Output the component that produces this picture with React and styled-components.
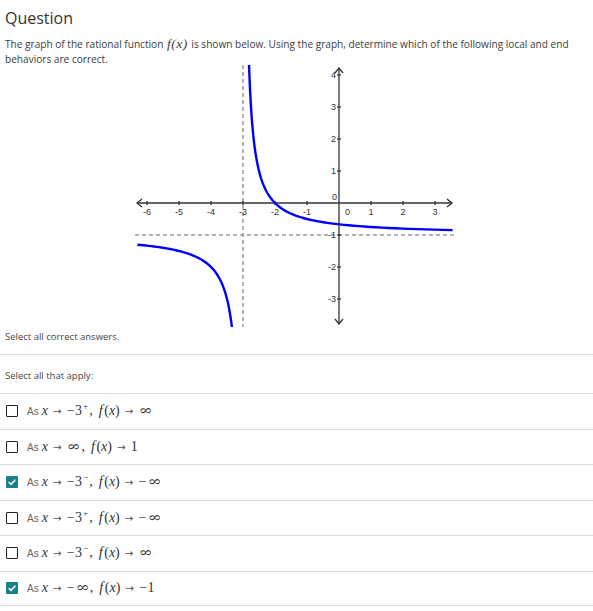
import React from 'react';
import styled, { createGlobalStyle } from 'styled-components';

const GlobalStyle = createGlobalStyle`
  html, body {
    margin: 0;
    padding: 0;
    background: #fff;
    overflow: hidden;
  }
  body {
    font-family: "Open Sans", "Liberation Sans", sans-serif;
    color: #333;
  }
`;

const U = 32;
const OX = 204;
const OY = 138;
const px = (x) => OX + x * U;
const py = (y) => OY - y * U;
const f = (x) => -1 + 1 / (x + 3);

const branch = (from, to, sign) => {
  const pts = [];
  const a = Math.log(from);
  const b = Math.log(to);
  for (let i = 0; i <= 80; i++) {
    const d = Math.exp(a + ((b - a) * i) / 80);
    const x = -3 + sign * d;
    pts.push(`${px(x).toFixed(2)},${py(f(x)).toFixed(2)}`);
  }
  return 'M' + pts.join(' L');
};

const rightPath = branch(0.17, 6.55, 1);
const leftPath = branch(0.34, 3.3, -1);

const options = [
  { id: 1, checked: false, lim: ['−', '3'], side: '+', val: ['', '∞'] },
  { id: 2, checked: false, lim: ['', '∞'], side: null, val: ['', '1'] },
  { id: 3, checked: true, lim: ['−', '3'], side: '−', val: ['−', '∞'] },
  { id: 4, checked: false, lim: ['−', '3'], side: '+', val: ['−', '∞'] },
  { id: 5, checked: false, lim: ['−', '3'], side: '−', val: ['', '∞'] },
  { id: 6, checked: true, lim: ['−', '∞'], side: null, val: ['−', '1'] },
];

const Graph = () => {
  const xs = [-6, -5, -4, -3, -2, -1, 1, 2, 3];
  const ys = [-3, -2, -1, 1, 2, 3, 4];
  return (
    <GraphSvg width="319" height="262" viewBox="0 0 319 262">
      <line x1={px(-3)} y1="0" x2={px(-3)} y2="262" stroke="#9a9a9a" strokeWidth="1.5" strokeDasharray="4 3" />
      <line x1="0" y1={py(-1)} x2="319" y2={py(-1)} stroke="#9a9a9a" strokeWidth="1.5" strokeDasharray="4 3" />
      <g stroke="#333" strokeWidth="1.3" fill="none">
        <line x1="2" y1={OY} x2="317" y2={OY} />
        <polyline points={`7,${OY - 4} 2,${OY} 7,${OY + 4}`} />
        <polyline points={`312,${OY - 4} 317,${OY} 312,${OY + 4}`} />
        <line x1={OX} y1="3" x2={OX} y2="259" />
        <polyline points={`${OX - 4},8 ${OX},3 ${OX + 4},8`} />
        <polyline points={`${OX - 4},254 ${OX},259 ${OX + 4},254`} />
        {xs.map((x) => (
          <line key={'xt' + x} x1={px(x)} y1={OY - 2} x2={px(x)} y2={OY + 2} />
        ))}
        {ys.map((y) => (
          <line key={'yt' + y} x1={OX - 2} y1={py(y)} x2={OX + 2} y2={py(y)} />
        ))}
      </g>
      <g fill="#333" fontFamily='"Liberation Sans", Arial, sans-serif' fontSize="9">
        {xs.map((x) => (
          <text key={'xl' + x} x={px(x)} y={OY + 12} textAnchor="middle">
            {x < 0 ? '-' + -x : x}
          </text>
        ))}
        <text x={OX + 6} y={OY + 12}>0</text>
        <text x={OX - 2} y={OY - 3} textAnchor="end">0</text>
        {ys.map((y) => (
          <text key={'yl' + y} x={OX - 3} y={py(y) + 3} textAnchor="end">
            {y < 0 ? '-' + -y : y}
          </text>
        ))}
      </g>
      <path d={rightPath} stroke="#0000ff" strokeWidth="2.4" fill="none" />
      <path d={leftPath} stroke="#0000ff" strokeWidth="2.4" fill="none" />
    </GraphSvg>
  );
};

const Check = () => (
  <svg width="10" height="10" viewBox="0 0 10 10">
    <polyline points="1.8,5.2 4,7.3 8.4,2.8" stroke="#fff" strokeWidth="1.6" fill="none" />
  </svg>
);

const Num = ({ parts }) => (
  <>
    {parts[0] && <Minus>{parts[0]}</Minus>}
    {parts[1] === '∞' ? <Inf>∞</Inf> : <Mn>{parts[1]}</Mn>}
  </>
);

const Option = ({ o }) => (
  <Row>
    <Box $checked={o.checked}>{o.checked && <Check />}</Box>
    <Label>
      <As>As</As>
      <Mi>x</Mi>
      <Rel>→</Rel>
      <Num parts={o.lim} />
      {o.side && <Sup>{o.side}</Sup>}
      <Comma>,</Comma>
      <Fn>f</Fn>
      <Mn>(</Mn>
      <Mi>x</Mi>
      <Mn>)</Mn>
      <Rel>→</Rel>
      <Num parts={o.val} />
    </Label>
  </Row>
);

export default function App() {
  return (
    <Page>
      <GlobalStyle />
      <Title>Question</Title>
      <Prompt>
        The graph of the rational function <InlineMath>f(x)</InlineMath> is shown below. Using the graph, determine
        which of the following local and end behaviors are correct.
      </Prompt>
      <Graph />
      <Hint>Select all correct answers.</Hint>
      <Instruction>Select all that apply:</Instruction>
      <List>
        {options.map((o) => (
          <Option key={o.id} o={o} />
        ))}
      </List>
    </Page>
  );
}

const Page = styled.div`
  width: 593px;
`;

const Title = styled.h2`
  margin: 0;
  padding: 8px 5px 0;
  font-size: 16px;
  line-height: 20px;
  font-weight: 400;
  color: #333;
`;

const Prompt = styled.p`
  margin: 9px 0 0;
  padding: 0 5px;
  font-size: 10.1px;
  line-height: 15px;
  height: 30px;
  color: #3c3c3c;
`;

const InlineMath = styled.span`
  font-family: "Liberation Serif", "DejaVu Serif", serif;
  font-style: italic;
  font-size: 13.5px;
  line-height: 10px;
  letter-spacing: 0.5px;
  padding: 0 1px;
`;

const GraphSvg = styled.svg`
  display: block;
  margin: -2px 0 0 135px;
  overflow: hidden;
`;

const Hint = styled.div`
  padding: 3px 5px 10px;
  font-size: 9.5px;
  line-height: 14px;
  color: #444;
  border-bottom: 1px solid #dcdcdc;
`;

const Instruction = styled.div`
  padding: 14px 5px 10px;
  font-size: 9.5px;
  line-height: 14px;
  color: #444;
`;

const List = styled.div`
  display: flex;
  flex-direction: column;
`;

const Row = styled.div`
  display: flex;
  align-items: center;
  gap: 9px;
  height: 35.5px;
  box-sizing: border-box;
  padding: 0 6px;
  border-top: 1px solid #dcdcdc;
  &:last-child {
    border-bottom: 1px solid #dcdcdc;
  }
`;

const Box = styled.span`
  width: 12px;
  height: 12px;
  box-sizing: border-box;
  display: flex;
  align-items: center;
  justify-content: center;
  border: ${(p) => (p.$checked ? 'none' : '1.5px solid #222')};
  background: ${(p) => (p.$checked ? '#17808b' : '#fff')};
  border-radius: 1px;
`;

const Label = styled.span`
  display: flex;
  align-items: baseline;
  color: #333;
  line-height: 16px;
`;

const As = styled.span`
  font-family: "Liberation Sans", Arial, sans-serif;
  font-size: 10px;
  color: #666;
  margin-right: 3px;
`;

const Mi = styled.span`
  font-family: "Liberation Serif", "DejaVu Serif", serif;
  font-style: italic;
  font-size: 14px;
`;

const Fn = styled(Mi)`
  font-size: 14.5px;
  padding-right: 1.5px;
`;

const Mn = styled.span`
  font-family: "Liberation Serif", "DejaVu Serif", serif;
  font-size: 14px;
`;

const Minus = styled(Mn)`
  color: #444;
  margin-right: 0.5px;
`;

const Inf = styled.span`
  font-family: "DejaVu Serif", serif;
  font-size: 14px;
  transform: scaleX(1.2);
  display: inline-block;
  margin: 0 1.5px;
`;

const Comma = styled(Mn)`
  margin-right: 6px;
`;

const Rel = styled.span`
  margin: 0 5px;
  font-family: "DejaVu Sans", sans-serif;
  font-size: 10.5px;
  color: #555;
`;

const Sup = styled.span`
  font-family: "Liberation Serif", "DejaVu Serif", serif;
  font-size: 9px;
  position: relative;
  top: -6px;
  margin: 0 1px;
`;
